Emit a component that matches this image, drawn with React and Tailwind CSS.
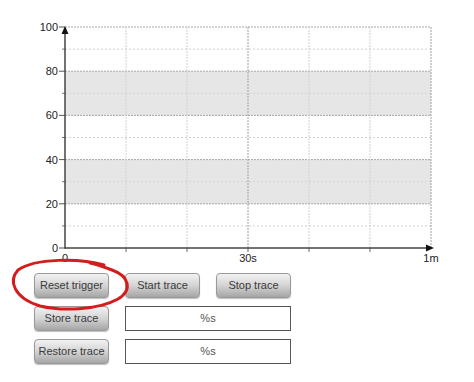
import React from "react";

const yOf = (v) => 248 - v * 2.21;
const xs = [65, 126, 187, 248, 309, 370, 431];

function Chart() {
  const minor = [10, 30, 50, 70, 90];
  const major = [20, 40, 60, 80, 100];
  return (
    <svg width="474" height="266" viewBox="0 0 474 266" className="block">
      <rect x="65" y={yOf(80)} width="366" height={yOf(60) - yOf(80)} fill="#e6e6e6" />
      <rect x="65" y={yOf(40)} width="366" height={yOf(20) - yOf(40)} fill="#e6e6e6" />
      {minor.map((v) => (
        <line key={"m" + v} x1="65" x2="431" y1={yOf(v)} y2={yOf(v)} stroke="#d2d2d2" strokeWidth="1" strokeDasharray="2 2" />
      ))}
      {major.map((v) => (
        <line key={"M" + v} x1="65" x2="431" y1={yOf(v)} y2={yOf(v)} stroke="#a8a8a8" strokeWidth="1" strokeDasharray="2 1" />
      ))}
      {xs.slice(1).map((x) => (
        <line
          key={"v" + x}
          x1={x}
          x2={x}
          y1="27"
          y2="248"
          stroke={x === 248 || x === 431 ? "#a0a0a0" : "#d2d2d2"}
          strokeWidth="1"
          strokeDasharray="2 1"
        />
      ))}
      {major.concat([0]).map((v) => (
        <line key={"t" + v} x1="59" x2="65" y1={yOf(v)} y2={yOf(v)} stroke="#555" strokeWidth="1" />
      ))}
      {minor.map((v) => (
        <line key={"tm" + v} x1="62" x2="65" y1={yOf(v)} y2={yOf(v)} stroke="#777" strokeWidth="1" />
      ))}
      {xs.slice(1, 6).map((x) => (
        <line key={"tx" + x} x1={x} x2={x} y1="248" y2="252" stroke="#666" strokeWidth="1" />
      ))}
      <line x1="65" x2="65" y1="32" y2="248.5" stroke="#444" strokeWidth="1.5" />
      <line x1="64.5" x2="428" y1="248" y2="248" stroke="#444" strokeWidth="1.5" />
      <polygon points="65,26 61.5,34 68.5,34" fill="#111" />
      <polygon points="434,248 426,244.5 426,251.5" fill="#111" />
      <g fontFamily="'Liberation Sans', Arial, sans-serif" fontSize="11" fill="#222">
        {[0, 20, 40, 60, 80, 100].map((v) => (
          <text key={"l" + v} x="58" y={yOf(v) + 4} textAnchor="end">
            {v}
          </text>
        ))}
        <text x="65" y="262" textAnchor="middle">0</text>
        <text x="248" y="262" textAnchor="middle">30s</text>
        <text x="431" y="262" textAnchor="middle">1m</text>
      </g>
    </svg>
  );
}

function Btn({ children }) {
  return (
    <button className="w-[75px] h-[25px] rounded-[4px] border border-[#999] bg-gradient-to-b from-[#f2f2f2] via-[#d4d4d4] to-[#a6a6a6] shadow-[0_1px_1px_rgba(0,0,0,0.25)] text-[11px] text-[#3a3a3a] leading-none flex items-center justify-center font-['Liberation_Sans',Arial,sans-serif]">
      {children}
    </button>
  );
}

function Field() {
  return (
    <div className="w-[166px] h-[25px] border border-[#555] bg-white flex items-center justify-center text-[11px] text-[#555] font-['Liberation_Sans',Arial,sans-serif]">
      %s
    </div>
  );
}

export default function App() {
  return (
    <div className="relative w-[474px] h-[382px] bg-white overflow-hidden font-['Liberation_Sans',Arial,sans-serif]">
      <Chart />
      <div className="pl-[34px] pt-[7px] flex flex-col gap-[8px]">
        <div className="flex gap-[16px]">
          <Btn>Reset trigger</Btn>
          <Btn>Start trace</Btn>
          <Btn>Stop trace</Btn>
        </div>
        <div className="flex gap-[16px]">
          <Btn>Store trace</Btn>
          <Field />
        </div>
        <div className="flex gap-[16px]">
          <Btn>Restore trace</Btn>
          <Field />
        </div>
      </div>
      <svg className="absolute left-0 top-0 pointer-events-none" width="474" height="382" viewBox="0 0 474 382">
        <path
          d="M 104 265 C 80 258, 35 258, 18 270 C 8 281, 14 298, 40 306 C 65 312, 100 309, 118 299 C 133 290, 129 276, 112 270 C 104 267, 96 264, 90 263"
          fill="none"
          stroke="#d41c1c"
          strokeWidth="3"
          strokeLinecap="round"
        />
      </svg>
    </div>
  );
}
